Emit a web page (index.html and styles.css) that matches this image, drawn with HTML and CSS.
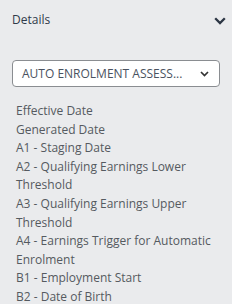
FILE: index.html
```html
<!DOCTYPE html>
<html>
<head>
<meta charset="utf-8">
<link rel="stylesheet" href="styles.css">
</head>
<body>
<div class="panel">
  <div class="header">
    <span class="title">Details</span>
    <svg class="chev" width="12" height="8" viewBox="0 0 12 8"><path d="M1.2 1.2 L6 6 L10.8 1.2" fill="none" stroke="#2c3644" stroke-width="2.3"/></svg>
  </div>
  <div class="select">
    <span class="select-text">AUTO ENROLMENT ASSESS...</span>
    <svg class="select-chev" width="9" height="6" viewBox="0 0 9 6"><path d="M1 1 L4.5 4.5 L8 1" fill="none" stroke="#333" stroke-width="1.7"/></svg>
  </div>
  <ul class="fields">
    <li>Effective Date</li>
    <li>Generated Date</li>
    <li>A1 - Staging Date</li>
    <li>A2 - Qualifying Earnings Lower Threshold</li>
    <li>A3 - Qualifying Earnings Upper Threshold</li>
    <li>A4 - Earnings Trigger for Automatic Enrolment</li>
    <li>B1 - Employment Start</li>
    <li>B2 - Date of Birth</li>
  </ul>
</div>
</body>
</html>
```
FILE: styles.css
```css
html, body {
  margin: 0;
  padding: 0;
  background: #eaebed;
}
body {
  font-family: "Open Sans", "Noto Sans", sans-serif;
  font-size: 12px;
  line-height: 18.6px;
  width: 232px;
  height: 304px;
  overflow: hidden;
}
.panel {
  padding: 11px 6px 0 12px;
}
.header {
  display: flex;
  align-items: center;
  justify-content: space-between;
  height: 19px;
}
.title {
  color: #2f3a4a;
}
.chev {
  display: block;
  margin-top: 1px;
}
.select {
  margin-top: 30px;
  height: 25px;
  border: 1px solid #8a8d91;
  border-radius: 4px;
  background: #fff;
  display: flex;
  align-items: center;
  justify-content: space-between;
  padding: 0 10px 0 9px;
  box-sizing: content-box;
  width: 187px;
}
.select-text {
  color: #4a5260;
  line-height: 25px;
  white-space: nowrap;
}
.select-chev {
  display: block;
}
.fields {
  list-style: none;
  margin: 15px 0 0 0;
  padding: 0 0 0 4px;
  color: #555a60;
}
.fields li {
  margin: 0;
}
```
